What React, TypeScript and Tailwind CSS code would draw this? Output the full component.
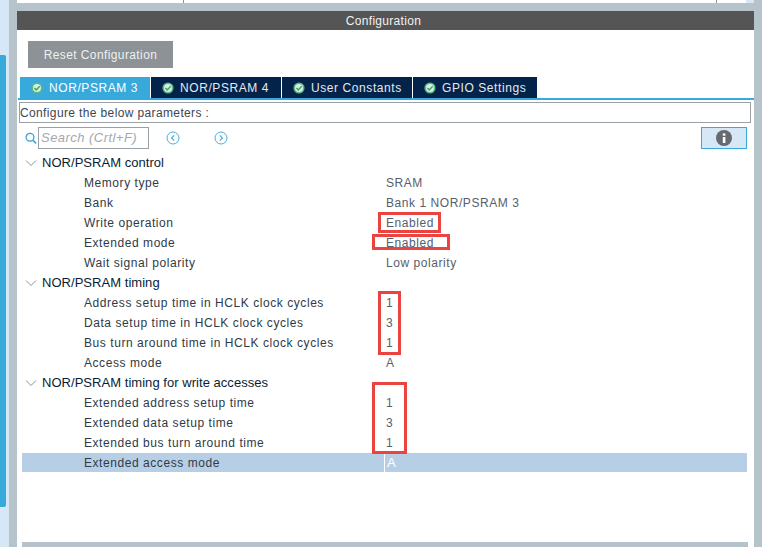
const FONT = "font-['Liberation_Sans',Arial,sans-serif]";

function CheckBadge() {
  return (
    <svg width="12" height="12" viewBox="0 0 12 12" className="shrink-0">
      <circle cx="6" cy="6" r="5.6" fill="#5cb583" />
      <circle cx="6" cy="6" r="4" fill="#d9efe1" />
      <path d="M3.4 6 L5.3 7.9 L8.7 4.3" fill="none" stroke="#3fa56c" strokeWidth="1.5" />
    </svg>
  );
}

function Tab({ label, active, width }: { label: string; active?: boolean; width: string }) {
  return (
    <div
      className={`${width} h-[21px] flex items-center pl-[11px] gap-[6px] text-[12px] tracking-[0.58px] ${
        active ? "bg-[#38a9db] text-white" : "bg-[#03234b] text-[#e6e9ee]"
      }`}
    >
      <CheckBadge />
      <span>{label}</span>
    </div>
  );
}

function Chevron() {
  return (
    <svg width="12" height="12" viewBox="0 0 12 12" className="shrink-0">
      <path d="M1 3.5 L6 8.5 L11 3.5" fill="none" stroke="#8a9299" strokeWidth="1" />
    </svg>
  );
}

function Section({ label }: { label: string }) {
  return (
    <div className="h-[20px] flex items-center pl-[3px] text-[13px] tracking-[0.04px] text-[#0c1c33]">
      <Chevron />
      <span className="ml-[5px]">{label}</span>
    </div>
  );
}

function Row({ label, value, selected }: { label: string; value: string; selected?: boolean }) {
  return (
    <div className={`${selected ? "h-[19px] bg-[#b7cfe6]" : "h-[20px]"} flex items-center text-[12px] tracking-[0.56px]`}>
      <span className="w-[364px] pl-[62px] shrink-0 text-[#2f3a46]">{label}</span>
      {selected ? (
        <span className="h-full flex items-center border-l border-white pl-[2px] -ml-[2px] text-white text-[13px]">{value}</span>
      ) : (
        <span className="text-[#56606b]">{value}</span>
      )}
    </div>
  );
}

function RedBox({ className }: { className: string }) {
  return <div className={`absolute border-[3px] border-[#ea4340] ${className}`} />;
}

export default function App() {
  return (
    <div className={`${FONT} relative w-[768px] h-[547px] overflow-hidden bg-white flex`}>
      {/* left strip */}
      <div className="w-[9px] shrink-0 bg-[#d6e7f6] flex flex-col">
        <div className="h-[55px] shrink-0" />
        <div className="w-[6px] h-[452px] bg-[#38a9db] rounded-r-[2px]" />
      </div>

      <div className="w-[753px] shrink-0 bg-[#b7c3ca] flex flex-col pl-[8px] pr-[8px]">
        {/* top panel remnant */}
        <div className="h-[3px] shrink-0 flex bg-white">
          <div className="w-[167px] border-r border-[#8d9499]" />
          <div className="w-[533px] border-r border-[#8d9499]" />
          <div className="flex-1 bg-[#d6e7f6] ml-[29px]" />
        </div>
        <div className="h-[8px] shrink-0" />

        {/* configuration panel */}
        <div className="flex-1 bg-white flex flex-col">
          <div className="h-[19px] shrink-0 bg-[#545554] text-[#f2f2f2] text-[12px] tracking-[0.3px] flex items-center justify-center pr-[4px]">
            Configuration
          </div>

          <div className="pt-[11px] pl-[11px]">
            <button className="w-[145px] h-[27px] bg-[#8c9296] text-[#eef0f1] text-[12px] tracking-[0.4px]">
              Reset Configuration
            </button>
          </div>

          <div className="mt-[9px] pl-[3px] flex gap-[1px]">
            <Tab label="NOR/PSRAM 3" active width="w-[130px]" />
            <Tab label="NOR/PSRAM 4" width="w-[130px]" />
            <Tab label="User Constants" width="w-[130px]" />
            <Tab label="GPIO Settings" width="w-[124px]" />
          </div>
          <div className="ml-[1px] h-[2px] bg-[#38a9db]" />

          <div className="mt-[2px] ml-[2px] w-[732px] h-[21px] border border-[#9aa1a6] flex items-center text-[12px] tracking-[0.37px] text-[#3c4651]">
            Configure the below parameters :
          </div>

          <div className="mt-[4px] flex items-center h-[22px] pl-[8px] pr-[7px]">
            <svg width="12" height="13" viewBox="0 0 12 13" className="shrink-0 mr-[1px]">
              <circle cx="5" cy="5.2" r="3.9" fill="none" stroke="#38a0d8" strokeWidth="1.3" />
              <path d="M8 8.2 L11 11.4" stroke="#38a0d8" strokeWidth="1.6" />
            </svg>
            <div className="w-[111px] h-[22px] border border-[#9aa1a6] flex items-center pl-[2px] text-[13px] italic tracking-[0.46px] text-[#a4a8ac]">
              Search (Crtl+F)
            </div>
            <svg width="14" height="14" viewBox="0 0 14 14" className="shrink-0 ml-[17px]">
              <circle cx="7" cy="7" r="6" fill="none" stroke="#4aaee0" strokeWidth="1" />
              <path d="M8.2 4.4 L5.6 7 L8.2 9.6" fill="none" stroke="#4aaee0" strokeWidth="1.2" />
            </svg>
            <svg width="14" height="14" viewBox="0 0 14 14" className="shrink-0 ml-[34px]">
              <circle cx="7" cy="7" r="6" fill="none" stroke="#4aaee0" strokeWidth="1" />
              <path d="M5.8 4.4 L8.4 7 L5.8 9.6" fill="none" stroke="#4aaee0" strokeWidth="1.2" />
            </svg>
            <div className="ml-auto w-[46px] h-[22px] bg-[#d6e7f6] border border-[#38a9db] flex items-center justify-center">
              <svg width="16" height="16" viewBox="0 0 16 16">
                <circle cx="8" cy="8" r="8" fill="#666a6e" />
                <rect x="6.8" y="7" width="2.6" height="6" fill="#ffffff" />
                <rect x="6.8" y="3.4" width="2.6" height="2.3" fill="#ffffff" />
              </svg>
            </div>
          </div>

          <div className="mt-[4px] ml-[5px] w-[725px]">
            <Section label="NOR/PSRAM control" />
            <Row label="Memory type" value="SRAM" />
            <Row label="Bank" value="Bank 1 NOR/PSRAM 3" />
            <Row label="Write operation" value="Enabled" />
            <Row label="Extended mode" value="Enabled" />
            <Row label="Wait signal polarity" value="Low polarity" />
            <Section label="NOR/PSRAM timing" />
            <Row label="Address setup time in HCLK clock cycles" value="1" />
            <Row label="Data setup time in HCLK clock cycles" value="3" />
            <Row label="Bus turn around time in HCLK clock cycles" value="1" />
            <Row label="Access mode" value="A" />
            <Section label="NOR/PSRAM timing for write accesses" />
            <Row label="Extended address setup time" value="1" />
            <Row label="Extended data setup time" value="3" />
            <Row label="Extended bus turn around time" value="1" />
            <Row label="Extended access mode" value="A" selected />
          </div>

          <div className="mt-auto ml-[5px] w-[726px] h-[5px] bg-[#b7c3ca]" />
        </div>
      </div>

      {/* red annotation boxes */}
      <RedBox className="left-[378px] top-[212px] w-[63px] h-[21px]" />
      <RedBox className="left-[372px] top-[234px] w-[78px] h-[16px]" />
      <RedBox className="left-[378px] top-[291px] w-[23px] h-[64px]" />
      <RedBox className="left-[372px] top-[382px] w-[35px] h-[72px]" />
    </div>
  );
}
